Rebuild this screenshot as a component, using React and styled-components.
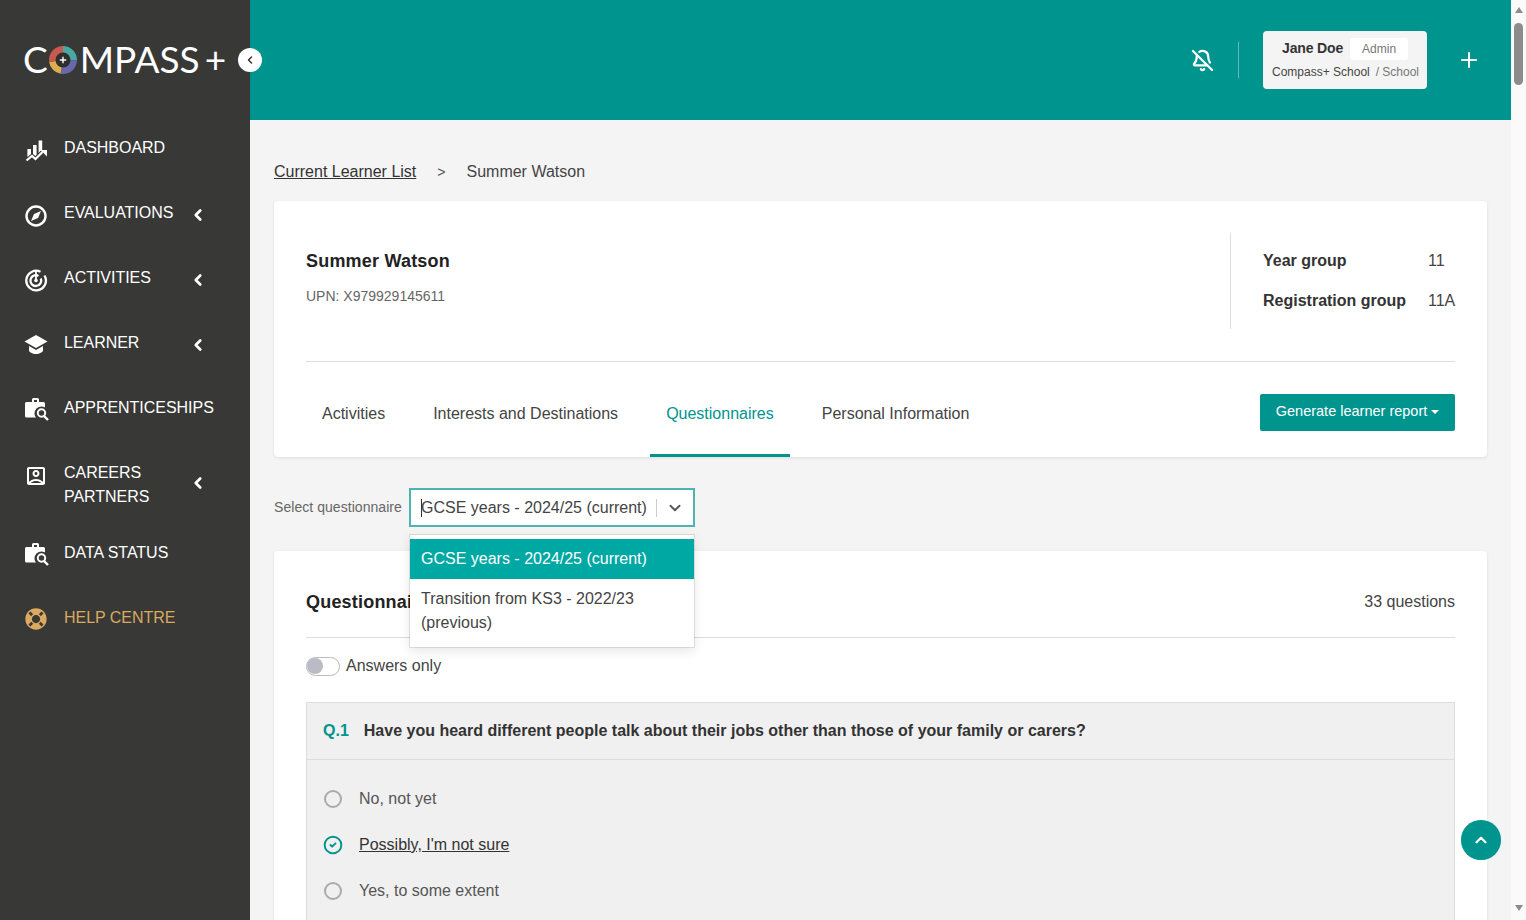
import React from 'react';
import styled, { createGlobalStyle } from 'styled-components';
import { BellOff, Plus, ChevronLeft, ChevronDown, ChevronUp, CircleCheck } from 'lucide-react';
import { FaLifeRing } from 'react-icons/fa';
import { MdOutlineAccountBox } from 'react-icons/md';

const TEAL = '#00948f';

const Global = createGlobalStyle`
  html, body { margin: 0; padding: 0; height: 100%; overflow: hidden; }
  body { font-family: "Liberation Sans", Arial, sans-serif; color: #333; font-size: 16px; line-height: 24px; background: #f4f4f4; }
  * { box-sizing: border-box; }
`;

const Page = styled.div`display: flex; width: 1526px; height: 920px; overflow: hidden; background: #f4f4f4;`;
const Sidebar = styled.aside`position: relative; flex: 0 0 250px; background: #383836; color: #fff;`;
const LogoRow = styled.div`height: 120px; padding: 0 0 3px 23px; display: flex; align-items: center; font-family: Lato, sans-serif; font-size: 37px; line-height: 1; color: #fff;`;
const LogoWord = styled.span`margin-left: ${p => p.$ml || '0'};`;
const Ring = styled.svg`width: 28px; height: 28px; margin: 3px 3px 0 1px; flex: none;`;
const Collapse = styled.button`position: absolute; top: 48px; left: 238px; width: 24px; height: 24px; border: 0; padding: 0; border-radius: 50%; background: #fff; color: #333; display: flex; align-items: center; justify-content: center;`;
const Nav = styled.nav`padding: 16px 0 0 24px; display: flex; flex-direction: column;`;
const Item = styled.a`display: flex; align-items: flex-start; height: ${p => p.$tall ? '80px' : '65px'}; color: ${p => p.$help ? '#dba960' : '#fff'};`;
const IconBox = styled.span`flex: 0 0 24px; width: 24px; height: 24px; margin-top: ${p => p.$up ? '1px' : '3px'}; margin-right: 16px; display: flex; align-items: center; justify-content: center;`;
const Label = styled.span`flex: 0 0 125px; white-space: nowrap; font-size: 16px; line-height: 24px; letter-spacing: -0.03px;`;
const NavChevron = styled(ChevronLeft)`flex: none; width: 18px; height: 18px; stroke-width: 3.6; margin-top: ${p => p.$tall ? '13px' : '5px'};`;

const Main = styled.main`flex: 0 0 1261px; height: 920px; overflow: hidden; display: flex; flex-direction: column;`;
const Header = styled.header`flex: 0 0 120px; background: ${TEAL}; display: flex; align-items: center; justify-content: flex-end; gap: 24px; padding-right: 30px; color: #fff;`;
const Divider = styled.span`width: 1px; height: 36px; background: #5fbcb9;`;
const UserCard = styled.div`width: 164px; height: 58px; margin-right: 6px; border-radius: 4px; background: #f4f4f4; padding: 7px 8px 0 9px;`;
const UserTop = styled.div`display: flex; align-items: center; padding-left: 10px; height: 22px;`;
const UserName = styled.span`margin-top: -2px; font-size: 14px; font-weight: 700; color: #333; line-height: 20px; white-space: nowrap; letter-spacing: -0.15px;`;
const Role = styled.span`width: 58px; height: 22px; margin-left: 7px; border-radius: 3px; background: #fff; color: #777; font-size: 12px; line-height: 22px; text-align: center;`;
const UserBottom = styled.div`margin-top: 1px; display: flex; justify-content: space-between; font-size: 12px; line-height: 22px; white-space: nowrap; color: #444;`;
const Muted = styled.span`color: #777;`;

const Content = styled.div`padding: 40px 24px 0; display: flex; flex-direction: column;`;
const Crumbs = styled.div`display: flex; height: 24px; margin-bottom: 17px; font-size: 16px; color: #444;`;
const CrumbLink = styled.a`color: #333; text-decoration: underline;`;
const Sep = styled.span`margin: 0 21px; color: #555; font-size: 14px;`;
const Card = styled.section`background: #fff; border-radius: 4px; box-shadow: 0 1px 3px rgba(0,0,0,.1); padding: ${p => p.$pad || '32px 32px 0'};`;
const Top = styled.div`display: flex; justify-content: space-between; height: 96px;`;
const Name = styled.h1`margin: 16px 0 0; font-size: 18px; line-height: 24px; font-weight: 700; color: #222; letter-spacing: .2px;`;
const Upn = styled.div`margin-top: 11px; font-size: 14px; line-height: 24px; color: #666;`;
const Facts = styled.div`width: 225px; border-left: 1px solid #ddd; padding: 16px 0 0 32px; display: grid; grid-template-columns: 1fr 27px; grid-auto-rows: 40px; align-content: start;`;
const FactKey = styled.span`font-weight: 700; color: #333; font-size: 16px; white-space: nowrap;`;
const FactVal = styled.span`color: #444; font-size: 16px; white-space: nowrap;`;
const Rule = styled.hr`margin: ${p => p.$m || '0'}; border: 0; border-top: 1px solid #ddd;`;
const TabRow = styled.div`display: flex; justify-content: space-between; align-items: center; height: 95px;`;
const Tabs = styled.div`display: flex; gap: 16px; align-self: stretch;`;
const Tab = styled.a`display: flex; align-items: center; padding: 14px 16px 2px; font-size: 16px; color: ${p => p.$active ? TEAL : '#444'}; border-bottom: 3px solid ${p => p.$active ? TEAL : 'transparent'};`;
const ReportBtn = styled.button`width: 195px; height: 37px; margin-top: 6px; border: 0; border-radius: 2px; background: ${TEAL}; color: #fff; font: 14.5px "Liberation Sans", Arial, sans-serif; display: flex; align-items: center; justify-content: center; gap: 4px; padding: 0 0 3px;`;
const Caret = styled.span`width: 0; height: 0; margin-top: 2px; border-left: 4px solid transparent; border-right: 4px solid transparent; border-top: 4px solid #fff;`;

const SelectRow = styled.div`position: relative; display: flex; align-items: center; margin: 31px 0 24px; height: 39px;`;
const SelectLabel = styled.label`width: 135px; padding-bottom: 2px; font-size: 14px; letter-spacing: .05px; color: #666; white-space: nowrap;`;
const Select = styled.div`width: 286px; height: 39px; border: 2px solid #4fb3b0; background: #fff; display: flex; align-items: center; padding-left: 10px;`;
const Cursor = styled.span`width: 1px; height: 18px; margin-right: -1px; background: #333; flex: none;`;
const Value = styled.span`flex: 1; font-size: 16px; color: #444; white-space: nowrap;`;
const IndSep = styled.span`width: 1px; height: 18px; background: #ccc;`;
const Arrow = styled.span`width: 36px; display: flex; justify-content: center; color: #555;`;
const Menu = styled.div`position: absolute; z-index: 5; left: 136px; top: 47px; width: 284px; background: #fff; padding: 4px 0; box-shadow: 0 0 0 1px rgba(0,0,0,.1), 0 4px 11px rgba(0,0,0,.1);`;
const Option = styled.div`padding: 8px 12px 8px 11px; font-size: 16px; line-height: 24px; background: ${p => p.$sel ? '#00a8a3' : '#fff'}; color: ${p => p.$sel ? '#fff' : '#444'};`;

const TitleRow = styled.div`display: flex; justify-content: space-between; align-items: center; height: 32px;`;
const Title = styled.h2`margin: 0; font-size: 18px; line-height: 24px; font-weight: 700; color: #222; letter-spacing: .2px;`;
const Count = styled.span`font-size: 16px; color: #444;`;
const ToggleRow = styled.div`display: flex; align-items: center; gap: 6px; height: 24px; margin: 16px 0 24px; font-size: 16px; color: #444;`;
const Toggle = styled.span`width: 34px; height: 19px; padding: 2px; border: 1px solid #bbb; border-radius: 10px; background: #fff; display: flex; align-items: center;`;
const Knob = styled.span`width: 16px; height: 16px; margin-left: -2px; border-radius: 50%; background: #b9bcc5;`;
const QBox = styled.div`border: 1px solid #ddd; background: #f0f0f0; height: 400px;`;
const QHead = styled.div`height: 57px; display: flex; align-items: center; gap: 15px; padding: 0 16px 1px; border-bottom: 1px solid #ddd; font-weight: 700; font-size: 16px; color: #333;`;
const QNum = styled.span`color: ${TEAL};`;
const Answers = styled.div`padding: 27px 16px 15px 17px; display: flex; flex-direction: column; gap: 22px;`;
const Answer = styled.div`display: flex; align-items: center; gap: 17px; height: 24px; font-size: 16px; color: ${p => p.$on ? '#333' : '#555'}; text-decoration: ${p => p.$on ? 'underline' : 'none'};`;
const Radio = styled.span`width: 18px; height: 18px; flex: none; border-radius: 50%; border: 2px solid #aaa;`;
const Check = styled(CircleCheck)`width: 20px; height: 20px; margin: 0 -1px; flex: none; color: ${TEAL}; stroke-width: 2.3;`;

const ScrollTrack = styled.div`flex: 0 0 15px; height: 920px; background: #fafafa; display: flex; flex-direction: column; align-items: center; justify-content: space-between; padding: 7px 0 6px;`;
const ScrollThumb = styled.span`width: 9px; height: 62px; margin-top: 10px; margin-bottom: auto; border-radius: 5px; background: #8c8c8c;`;
const ArrowUp = styled.span`width: 0; height: 0; border-left: 4.5px solid transparent; border-right: 4.5px solid transparent; border-bottom: 6px solid #8c8c8c;`;
const ArrowDown = styled.span`width: 0; height: 0; margin-bottom: 3px; border-left: 4.5px solid transparent; border-right: 4.5px solid transparent; border-top: 6px solid #8c8c8c;`;
const ToTop = styled.button`position: fixed; left: 1461px; top: 820px; width: 40px; height: 40px; padding: 0; border: 0; border-radius: 50%; background: ${TEAL}; color: #fff; display: flex; align-items: center; justify-content: center; box-shadow: 0 0 1px #7fe0dc;`;
const CaseSvg = styled.svg`flex: none; width: 26px; height: 26px; margin-left: 2px;`;

const arc = (a0, a1, r0 = 14, r1 = 7) => {
  const p = (r, a) => `${(14 + r * Math.sin(a * Math.PI / 180)).toFixed(2)} ${(14 - r * Math.cos(a * Math.PI / 180)).toFixed(2)}`;
  return `M${p(r0, a0)} A${r0} ${r0} 0 0 1 ${p(r0, a1)} L${p(r1, a1)} A${r1} ${r1} 0 0 0 ${p(r1, a0)} Z`;
};

const Logo = () => (
  <LogoRow>
    <LogoWord>C</LogoWord>
    <Ring viewBox="0 0 28 28">
      <path d={arc(0, 92)} fill="#4aa7a3" />
      <path d={arc(92, 190)} fill="#6a68ad" />
      <path d={arc(190, 262)} fill="#dcae4e" />
      <path d={arc(262, 360)} fill="#c9584f" />
      <circle cx="14" cy="14" r="7.5" fill="#2e2e2c" />
      <path d="M14 10.8v6.4M10.8 14h6.4" stroke="#fff" strokeWidth="1.4" />
    </Ring>
    <LogoWord>MPASS</LogoWord>
    <LogoWord $ml="5px">+</LogoWord>
  </LogoRow>
);

const ChartIcon = () => (
  <svg width="24" height="24" viewBox="0 0 24 24" fill="#fff">
    <rect x="3.4" y="10" width="3.6" height="9" />
    <rect x="9" y="6" width="3.6" height="11" />
    <rect x="14.6" y="1.5" width="3.6" height="13" />
    <path d="M2.5 21.5l5.5-4.5 3.5 3 7-7" fill="none" stroke="#383836" strokeWidth="4.4" />
    <path d="M2.5 21.5l5.5-4.5 3.5 3 7-7" fill="none" stroke="#fff" strokeWidth="2.2" />
    <path d="M16.5 11h6.5v6.5z" />
  </svg>
);
const CompassIcon = () => (
  <svg width="24" height="24" viewBox="0 0 24 24">
    <circle cx="12" cy="12" r="9.5" fill="none" stroke="#fff" strokeWidth="2.4" />
    <path d="M17 7l-3 7-7 3 3-7z" fill="#fff" />
  </svg>
);
const RadarIcon = () => (
  <svg width="24" height="24" viewBox="0 1.5 24 24" fill="none" stroke="#fff" strokeWidth="2.3">
    <path d="M16.5 4.3A9.8 9.8 0 1 0 20.5 8" />
    <path d="M14.5 8.4A5.4 5.4 0 1 0 16.8 11" />
    <path d="M12 2.5V12.5" strokeWidth="1.8" />
    <circle cx="12" cy="13" r="1.8" fill="#fff" stroke="none" />
  </svg>
);
const CapIcon = () => (
  <svg width="24" height="24" viewBox="0 0 24 24" fill="#fff">
    <path d="M12 3L.5 9.5 12 16l11.5-6.5z" />
    <path d="M5 14v4.5C5 20 8.5 22 12 22s7-2 7-3.500V14l-7 4z" />
  </svg>
);
const CaseIcon = () => (
  <CaseSvg viewBox="0 0 26 26">
    <path d="M8 6V3.5A1.5 1.5 0 0 1 9.5 2h4A1.5 1.5 0 0 1 15 3.5V6h4.5A1.5 1.5 0 0 1 21 7.5V20a1.5 1.5 0 0 1-1.5 1.5h-17A1.5 1.5 0 0 1 1 20V7.5A1.5 1.5 0 0 1 2.5 6zM10 4v2h3V4z" fill="#fff" fillRule="evenodd" />
    <circle cx="17.5" cy="17.5" r="7" fill="#383836" />
    <circle cx="17.5" cy="17" r="3.7" fill="none" stroke="#fff" strokeWidth="2" />
    <path d="M20 20l4 4" stroke="#fff" strokeWidth="2.4" />
  </CaseSvg>
);

const items = [
  { label: 'DASHBOARD', icon: <ChartIcon /> },
  { label: 'EVALUATIONS', icon: <CompassIcon />, chev: true },
  { label: 'ACTIVITIES', icon: <RadarIcon />, chev: true },
  { label: 'LEARNER', icon: <CapIcon />, chev: true, up: true },
  { label: 'APPRENTICESHIPS', icon: <CaseIcon />, up: true },
  { label: <>CAREERS<br />PARTNERS</>, icon: <MdOutlineAccountBox size={26} color="#fff" />, chev: true, tall: true },
  { label: 'DATA STATUS', icon: <CaseIcon />, up: true },
  { label: 'HELP CENTRE', icon: <FaLifeRing size={22} color="#dba960" />, help: true, up: true },
];

export default function App() {
  return (
    <Page>
      <Global />
      <Sidebar>
        <Logo />
        <Collapse aria-label="Collapse"><ChevronLeft size={12} strokeWidth={3} /></Collapse>
        <Nav>
          {items.map((it, i) => (
            <Item key={i} $tall={it.tall} $help={it.help}>
              <IconBox $up={it.up}>{it.icon}</IconBox>
              <Label>{it.label}</Label>
              {it.chev && <NavChevron $tall={it.tall} />}
            </Item>
          ))}
        </Nav>
      </Sidebar>
      <Main>
        <Header>
          <BellOff size={23} strokeWidth={2.3} />
          <Divider />
          <UserCard>
            <UserTop><UserName>Jane Doe</UserName><Role>Admin</Role></UserTop>
            <UserBottom><span>Compass+ School</span><Muted>/ School</Muted></UserBottom>
          </UserCard>
          <Plus size={24} strokeWidth={2} />
        </Header>
        <Content>
          <Crumbs>
            <CrumbLink>Current Learner List</CrumbLink>
            <Sep>&gt;</Sep>
            <span>Summer Watson</span>
          </Crumbs>
          <Card>
            <Top>
              <div>
                <Name>Summer Watson</Name>
                <Upn>UPN: X979929145611</Upn>
              </div>
              <Facts>
                <FactKey>Year group</FactKey><FactVal>11</FactVal>
                <FactKey>Registration group</FactKey><FactVal>11A</FactVal>
              </Facts>
            </Top>
            <Rule $m="32px 0 0" />
            <TabRow>
              <Tabs>
                <Tab>Activities</Tab>
                <Tab>Interests and Destinations</Tab>
                <Tab $active>Questionnaires</Tab>
                <Tab>Personal Information</Tab>
              </Tabs>
              <ReportBtn>Generate learner report<Caret /></ReportBtn>
            </TabRow>
          </Card>
          <SelectRow>
            <SelectLabel>Select questionnaire</SelectLabel>
            <Select>
              <Cursor />
              <Value>GCSE years - 2024/25 (current)</Value>
              <IndSep />
              <Arrow><ChevronDown size={18} strokeWidth={2.5} /></Arrow>
            </Select>
            <Menu>
              <Option $sel>GCSE years - 2024/25 (current)</Option>
              <Option>Transition from KS3 - 2022/23 (previous)</Option>
            </Menu>
          </SelectRow>
          <Card $pad="35px 32px 0">
            <TitleRow><Title>Questionnaire</Title><Count>33 questions</Count></TitleRow>
            <Rule $m="19px 0 0" />
            <ToggleRow><Toggle><Knob /></Toggle>Answers only</ToggleRow>
            <QBox>
              <QHead><QNum>Q.1</QNum>Have you heard different people talk about their jobs other than those of your family or carers?</QHead>
              <Answers>
                <Answer><Radio />No, not yet</Answer>
                <Answer $on><Check />Possibly, I'm not sure</Answer>
                <Answer><Radio />Yes, to some extent</Answer>
              </Answers>
            </QBox>
          </Card>
        </Content>
      </Main>
      <ScrollTrack>
        <ArrowUp />
        <ScrollThumb />
        <ArrowDown />
      </ScrollTrack>
      <ToTop aria-label="Back to top"><ChevronUp size={18} strokeWidth={3} /></ToTop>
    </Page>
  );
}
